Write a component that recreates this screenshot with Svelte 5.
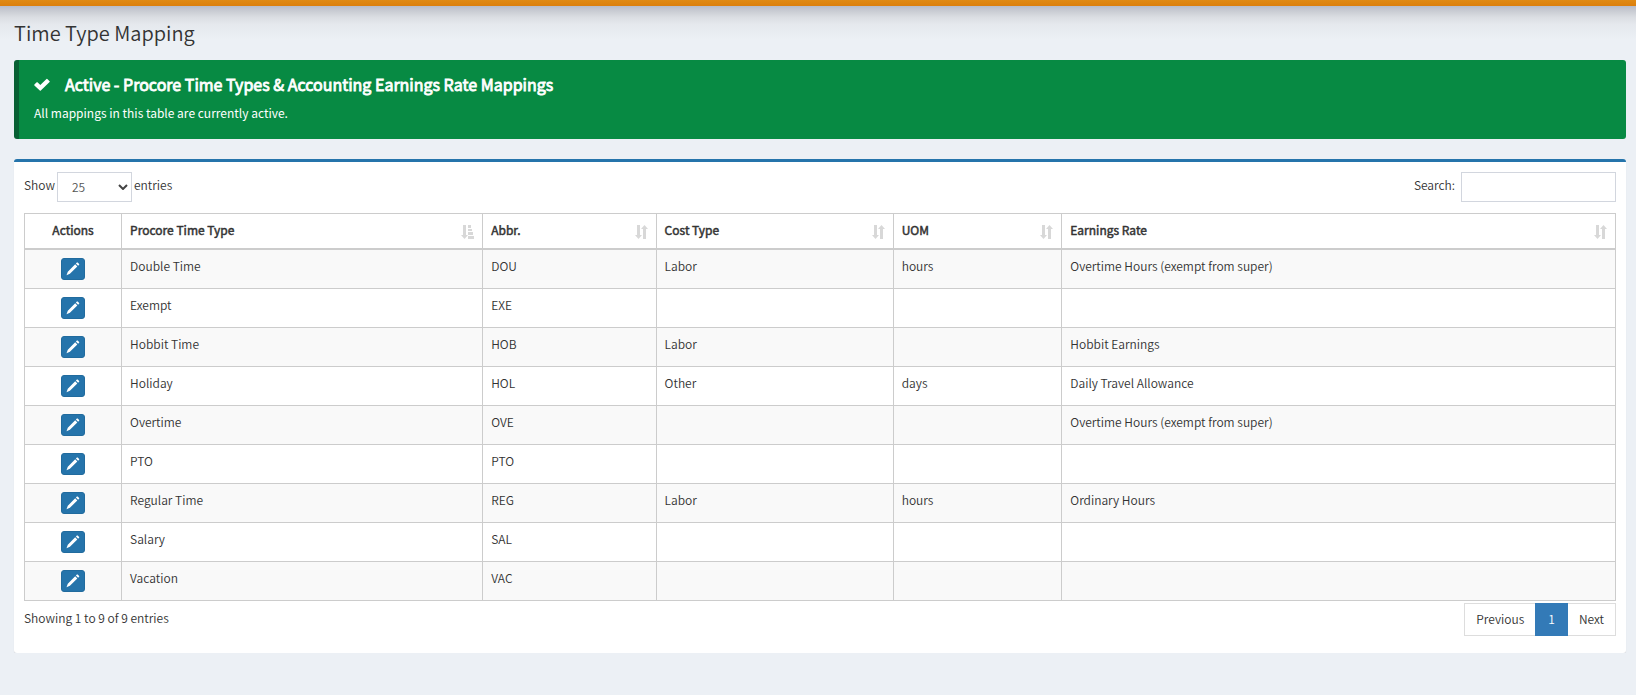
<script lang="ts">
  interface Mapping {
    name: string
    abbr: string
    costType: string
    uom: string
    rate: string
  }

  type Column = { key: keyof Mapping; label: string }

  const columns: Column[] = [
    { key: 'name', label: 'Procore Time Type' },
    { key: 'abbr', label: 'Abbr.' },
    { key: 'costType', label: 'Cost Type' },
    { key: 'uom', label: 'UOM' },
    { key: 'rate', label: 'Earnings Rate' },
  ]

  const mappings: Mapping[] = [
    { name: 'Double Time', abbr: 'DOU', costType: 'Labor', uom: 'hours', rate: 'Overtime Hours (exempt from super)' },
    { name: 'Exempt', abbr: 'EXE', costType: '', uom: '', rate: '' },
    { name: 'Hobbit Time', abbr: 'HOB', costType: 'Labor', uom: '', rate: 'Hobbit Earnings' },
    { name: 'Holiday', abbr: 'HOL', costType: 'Other', uom: 'days', rate: 'Daily Travel Allowance' },
    { name: 'Overtime', abbr: 'OVE', costType: '', uom: '', rate: 'Overtime Hours (exempt from super)' },
    { name: 'PTO', abbr: 'PTO', costType: '', uom: '', rate: '' },
    { name: 'Regular Time', abbr: 'REG', costType: 'Labor', uom: 'hours', rate: 'Ordinary Hours' },
    { name: 'Salary', abbr: 'SAL', costType: '', uom: '', rate: '' },
    { name: 'Vacation', abbr: 'VAC', costType: '', uom: '', rate: '' },
  ]

  let pageSize = $state(25)
  let search = $state('')
  let sortKey = $state<keyof Mapping>('name')
  let ascending = $state(true)

  let rows = $derived(
    mappings
      .filter(m => Object.values(m).join(' ').toLowerCase().includes(search.trim().toLowerCase()))
      .sort((a, b) => a[sortKey].localeCompare(b[sortKey]) * (ascending ? 1 : -1))
      .slice(0, pageSize)
  )

  function sortBy(key: keyof Mapping): void {
    ascending = sortKey === key ? !ascending : true
    sortKey = key
  }
</script>

<div class="topbar"></div>

<main class="content">
  <h1>Time Type Mapping</h1>

  <section class="callout">
    <h2>
      <svg class="check" viewBox="0 0 16 13" aria-hidden="true">
        <path d="M0.4 6.6 2.7 4.3Q3.1 4 3.5 4.3L6.3 7.1 12.5 0.9Q12.9 0.5 13.3 0.9L15.6 3.2Q16 3.6 15.6 4L6.8 12.6Q6.3 13 5.8 12.6L0.4 7.4Q0 7 0.4 6.6Z" />
      </svg>
      Active - Procore Time Types &amp; Accounting Earnings Rate Mappings
    </h2>
    <p>All mappings in this table are currently active.</p>
  </section>

  <section class="box">
    <div class="toolbar">
      <label>
        Show
        <span class="select">
          <select bind:value={pageSize}>
            <option value={10}>10</option>
            <option value={25}>25</option>
            <option value={50}>50</option>
            <option value={100}>100</option>
          </select>
          <svg viewBox="0 0 10 6" aria-hidden="true"><path d="M1 1l4 4 4-4" /></svg>
        </span>
        entries
      </label>
      <label class="search">Search: <input type="search" bind:value={search} /></label>
    </div>

    <table>
      <colgroup>
        <col class="col-actions" />
        <col class="col-name" />
        <col class="col-abbr" />
        <col class="col-cost" />
        <col class="col-uom" />
        <col />
      </colgroup>
      <thead>
        <tr>
          <th class="actions">Actions</th>
          {#each columns as col}
            <th aria-sort={sortKey === col.key ? (ascending ? 'ascending' : 'descending') : 'none'}>
              <button class="sort" type="button" onclick={() => sortBy(col.key)}>
                {col.label}
                <svg viewBox="0 0 13 14" aria-hidden="true">
                  <path d="M2 0h3v10h2L3.500 14 0 10h2z" />
                  {#if sortKey === col.key}
                    <path d="M7 0h3v3H7zM7 4h4v2H7zM7 7h5v3H7zM7 11h6v3H7z" />
                  {:else}
                    <path d="M8 14h3V4h2L9.500 0 6 4h2z" />
                  {/if}
                </svg>
              </button>
            </th>
          {/each}
        </tr>
      </thead>
      <tbody>
        {#each rows as row}
          <tr>
            <td class="actions">
              <button class="edit" type="button" aria-label="Edit {row.name}">
                <svg viewBox="0 0 14 14" aria-hidden="true">
                  <path d="M0.500 13.300 1.800 9.700 9.200 2.300 11.300 4.400 3.900 11.800zM9.900 1.600 10.900.6Q11.300.2 11.700.6L13.100 2Q13.500 2.400 13.100 2.800L12.100 3.800z" />
                </svg>
              </button>
            </td>
            {#each columns as col}
              <td>{row[col.key]}</td>
            {/each}
          </tr>
        {/each}
      </tbody>
    </table>

    <div class="footer">
      <span>Showing {rows.length ? 1 : 0} to {rows.length} of {rows.length} entries</span>
      <nav class="pagination" aria-label="Pagination">
        <a href="#previous">Previous</a>
        <a class="active" href="#page-1" aria-current="page">1</a>
        <a href="#next">Next</a>
      </nav>
    </div>
  </section>
</main>

<style>
  :global(body) {
    background: #ecf0f5;
    color: #333;
    font: 350 12px/16px "Source Sans Pro", "Noto Sans CJK SC", sans-serif;
  }

  .topbar {
    height: 6px;
    background: linear-gradient(#e08a14, #dc7f0c);
  }

  .content {
    padding: 13px 10px 0 14px;
    background: linear-gradient(#b9bcc8, #c9ccd3 5px, #dadde2 11px, #e5e8ed 18px, #ecf0f5 34px);
  }

  h1 {
    margin: 0 0 13px;
    font-size: 20px;
    font-weight: 350;
    line-height: 28px;
  }

  .callout {
    margin-bottom: 20px;
    padding: 14px 30px 18px 15px;
    border-left: 5px solid #086034;
    border-radius: 3px;
    background: #078a43;
    color: #fff;
  }

  .callout h2 {
    display: flex;
    align-items: center;
    gap: 15px;
    margin: 0 0 11px;
    font-size: 16px;
    font-weight: 400;
    line-height: 20px;
    -webkit-text-stroke: 0.05em;
  }

  .callout p {
    margin: 0;
    font-weight: 400;
  }

  .check {
    width: 16px;
    height: 13px;
    fill: #fff;
  }

  .box {
    padding: 10px 10px 17px;
    border-top: 3px solid #2574ab;
    border-radius: 3px;
    background: #fff;
    box-shadow: 0 1px 1px rgba(0, 0, 0, 0.1);
  }

  .toolbar {
    display: flex;
    justify-content: space-between;
    margin-bottom: 11px;
  }

  .toolbar label {
    display: flex;
    gap: 2px;
    line-height: 26px;
  }

  .toolbar .search {
    gap: 6px;
  }

  .select {
    position: relative;
  }

  .select select {
    width: 75px;
    padding: 0 14px;
    color: #555;
    appearance: none;
  }

  .select svg {
    position: absolute;
    top: 12px;
    right: 4px;
    width: 10px;
    height: 6px;
    fill: none;
    stroke: #444;
    stroke-width: 2;
    pointer-events: none;
  }

  select,
  input {
    box-sizing: border-box;
    height: 30px;
    border: 1px solid #d2d6de;
    border-radius: 0;
    background: #fff;
    font: inherit;
  }

  input {
    width: 155px;
    padding: 5px 10px;
  }

  table {
    width: 100%;
    table-layout: fixed;
    border-collapse: collapse;
  }

  .col-actions {
    width: 6.1%;
  }

  .col-name {
    width: 22.7%;
  }

  .col-abbr {
    width: 10.9%;
  }

  .col-cost {
    width: 14.9%;
  }

  .col-uom {
    width: 10.6%;
  }

  th,
  td {
    padding: 8px;
    border: 1px solid #ccc;
    text-align: left;
    vertical-align: top;
  }

  th {
    padding-bottom: 10px;
    border-bottom-width: 2px;
    font-weight: 400;
    -webkit-text-stroke: 0.04em;
  }

  td {
    height: 22px;
  }

  .actions {
    text-align: center;
  }

  tbody tr:nth-child(odd) {
    background: #f9f9f9;
  }

  .sort {
    display: flex;
    align-items: center;
    justify-content: space-between;
    width: 100%;
    padding: 0;
    border: 0;
    background: none;
    color: inherit;
    font: inherit;
    cursor: pointer;
  }

  .sort svg {
    width: 13px;
    height: 14px;
    margin-top: 2px;
    margin-bottom: -2px;
    fill: #d8d8d8;
  }

  .edit {
    display: inline-flex;
    align-items: center;
    justify-content: center;
    width: 24px;
    height: 22px;
    padding: 0;
    border: 1px solid #216b9e;
    border-radius: 3px;
    background: #2574ab;
    vertical-align: top;
    cursor: pointer;
  }

  .edit svg {
    width: 14px;
    height: 14px;
    fill: #fff;
  }

  .footer {
    display: flex;
    justify-content: space-between;
    padding-top: 2px;
    line-height: 29px;
  }

  .pagination {
    display: flex;
  }

  .pagination a {
    padding: 0 11px 2px;
    border: 1px solid #ddd;
    color: #333;
    text-decoration: none;
  }

  .pagination a:first-child {
    border-right: 0;
  }

  .pagination a:last-child {
    border-left: 0;
  }

  .pagination .active {
    padding: 0 12px 2px;
    border-color: #337ab7;
    background: #337ab7;
    color: #fff;
  }
</style>
